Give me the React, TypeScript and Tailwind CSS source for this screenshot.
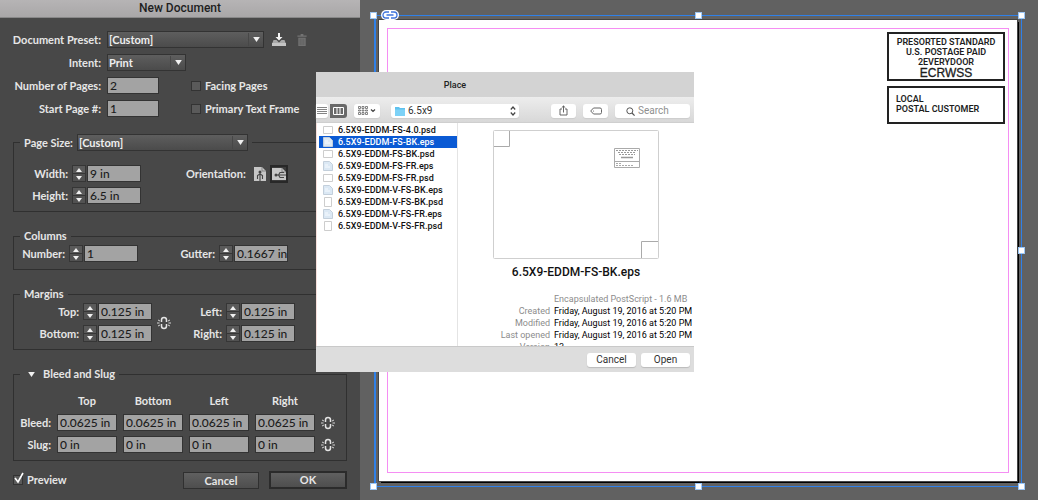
import { useId, type ReactNode } from 'react'
import clsx from 'clsx'

const field = 'h-[17px] min-w-0 border border-[#333] bg-[#a3a3a3] pl-[2px] text-[12px] leading-[15px] font-medium text-[#1c1c1c] outline-none'

function TriangleDown({ className }: { className?: string }) {
    return (
        <svg viewBox="0 0 8 6" className={clsx('h-[5px] w-[7px] fill-[#f0f0f0]', className)} aria-hidden="true">
            <path d="M0 0h8L4 6z" />
        </svg>
    )
}

function DarkSelect({ id, value, className }: { id: string; value: string; className: string }) {
    return (
        <div className={clsx('relative', className)}>
            <select
                id={id}
                className="block h-[17px] w-full appearance-none border border-[#333] bg-linear-to-b from-[#5e5e5e] to-[#4b4b4b] px-px text-[11px] leading-[15px] text-[#eee] outline-none"
                defaultValue={value}
            >
                <option>{value}</option>
            </select>
            <TriangleDown className="pointer-events-none absolute top-[6px] right-1" />
            <span className="pointer-events-none absolute inset-y-[2px] right-[15px] w-px bg-[#474747]" />
        </div>
    )
}

function Stepper() {
    return (
        <span className="flex h-[17px] w-[14px] shrink-0 flex-col gap-px border border-[#363636] bg-[#363636]">
            <button type="button" aria-label="Increase" className="grid flex-1 place-items-center bg-[#5a5a5a]">
                <svg viewBox="0 0 6 4" className="h-1 w-[6px] fill-[#f0f0f0]"><path d="M3 0l3 4H0z" /></svg>
            </button>
            <button type="button" aria-label="Decrease" className="grid flex-1 place-items-center bg-[#525252]">
                <svg viewBox="0 0 6 4" className="h-1 w-[6px] fill-[#f0f0f0]"><path d="M0 0h6L3 4z" /></svg>
            </button>
        </span>
    )
}

function StepField({ label, value, labelWidth }: { label: string; value: string; labelWidth: string }) {
    const id = useId()
    return (
        <div className="flex h-[17px] items-center">
            <label htmlFor={id} className={clsx('mr-1 text-right whitespace-nowrap', labelWidth)}>{label}</label>
            <Stepper />
            <input id={id} defaultValue={value} className={clsx(field, 'ml-px w-[54px]')} />
        </div>
    )
}

function DarkCheck({ label, checked }: { label: string; checked?: boolean }) {
    return (
        <label className="flex items-center gap-1 whitespace-nowrap">
            <span className="relative block h-[10px] w-[10px]">
                <input
                    type="checkbox"
                    defaultChecked={checked}
                    className="peer block h-[10px] w-[10px] appearance-none border border-[#333] bg-[#5a5a5a]"
                />
                <svg viewBox="0 0 12 12" className="pointer-events-none absolute -top-[3px] left-0 hidden h-3 w-3 peer-checked:block">
                    <path d="M2 6l3 4 5-9" fill="none" stroke="#fff" strokeWidth="1.600" />
                </svg>
            </span>
            {label}
        </label>
    )
}

function BrokenLink() {
    return (
        <button type="button" aria-label="Make all settings the same" className="grid h-[17px] w-[14px] place-items-center">
            <svg viewBox="0 0 14 14" className="h-[14px] w-[14px]" fill="none" stroke="#e4e4e4">
                <path d="M4.500 6V4a2.500 2.500 0 0 1 5 0v2M4.500 8v2a2.500 2.500 0 0 0 5 0V8" strokeWidth="1.500" />
                <path d="M3 5L1 4M2.500 7H0M3 9l-2 1M11 5l2-1M11.500 7H14M11 9l2 1" strokeWidth=".9" />
            </svg>
        </button>
    )
}

function Group({ legend, children }: { legend: ReactNode; children: ReactNode }) {
    return (
        <fieldset className="mt-[17px] min-w-0 border border-[#303030] pb-[7px]">
            <legend className="ml-[6px] px-1 leading-[14px]">{legend}</legend>
            {children}
        </fieldset>
    )
}

const sides = ['Top', 'Bottom', 'Left', 'Right']
const bleedRows = [
    { name: 'Bleed', value: '0.0625 in' },
    { name: 'Slug', value: '0 in' },
]

function NewDocument() {
    return (
        <section className="flex w-[360px] shrink-0 flex-col bg-[#484848] font-['Lato',sans-serif] text-[11px] leading-[14px] font-bold text-[#e6e6e6]">
            <h1 className="h-[18px] border-b border-[#888] bg-linear-to-b from-[#b6b4b5] to-[#a9a7a8] text-center font-['Roboto',sans-serif] text-[12px] leading-[17px] font-medium text-[#1e1e1e]">
                New Document
            </h1>
            <form className="flex flex-col pt-[13px] pr-[13px] pl-[13px]" onSubmit={(e) => e.preventDefault()}>
                <div className="grid grid-cols-[88px_1fr] items-center gap-x-[6px] gap-y-[6px]">
                    <label htmlFor="preset" className="justify-self-end whitespace-nowrap">Document Preset:</label>
                    <div className="flex h-[17px] items-center">
                        <DarkSelect id="preset" value="[Custom]" className="w-[157px]" />
                        <button type="button" aria-label="Save preset" className="ml-2">
                            <svg viewBox="0 0 14 14" className="h-[14px] w-[14px]">
                                <path d="M1.500 7L0 11v2h14v-2l-1.500-4H9.500L7 9.500 4.500 7z" fill="#a9a9a9" />
                                <path d="M0 10h14v3H0z" fill="#c4c4c4" />
                                <path d="M6 0h2v4h2.500L7 7.500 3.500 4H6z" fill="#f4f4f4" />
                            </svg>
                        </button>
                        <button type="button" aria-label="Delete preset" className="ml-[11px]" disabled>
                            <svg viewBox="0 0 10 13" className="h-3 w-[10px]" fill="#737373">
                                <path d="M3.500 0h3v1.500H10V3H0V1.500h3.500zM1 4h8v9H1z" />
                                <path d="M3 5v7M5 5v7M7 5v7" stroke="#555" strokeWidth=".7" />
                            </svg>
                        </button>
                    </div>
                    <label htmlFor="intent" className="justify-self-end">Intent:</label>
                    <DarkSelect id="intent" value="Print" className="w-[79px]" />
                    <label htmlFor="pages" className="justify-self-end whitespace-nowrap">Number of Pages:</label>
                    <div className="flex items-center gap-8">
                        <input id="pages" defaultValue="2" className={clsx(field, 'w-[52px]')} />
                        <DarkCheck label="Facing Pages" />
                    </div>
                    <label htmlFor="start" className="justify-self-end whitespace-nowrap">Start Page #:</label>
                    <div className="flex items-center gap-8">
                        <input id="start" defaultValue="1" className={clsx(field, 'w-[52px]')} />
                        <DarkCheck label="Primary Text Frame" />
                    </div>
                </div>

                <Group
                    legend={
                        <span className="flex items-center gap-1">
                            <label htmlFor="size" className="whitespace-nowrap">Page Size:</label>
                            <DarkSelect id="size" value="[Custom]" className="w-[171px]" />
                        </span>
                    }
                >
                    <div className="flex pt-[14px]">
                        <div className="flex flex-col gap-[5px]">
                            <StepField label="Width:" value="9 in" labelWidth="w-[54px]" />
                            <StepField label="Height:" value="6.5 in" labelWidth="w-[54px]" />
                        </div>
                        <div className="ml-[45px] flex h-[17px] items-center">
                            <span className="mr-[6px]">Orientation:</span>
                            <button type="button" aria-label="Portrait" className="grid h-[18px] w-[17px] place-items-center">
                                <svg viewBox="0 0 12 14" className="h-[14px] w-3">
                                    <path d="M0 0h8l4 4v10H0z" fill="#c6c6c6" />
                                    <path d="M8 0v4h4" fill="none" stroke="#777" strokeWidth=".8" />
                                    <path d="M6 14V6M3.500 12V8.500L6 7l2.500 1.500V12" fill="none" stroke="#444" strokeWidth="1.100" />
                                    <circle cx="6" cy="5" r="1.500" fill="#444" />
                                </svg>
                            </button>
                            <button type="button" aria-label="Landscape" className="ml-px grid h-[18px] w-[18px] place-items-center border-2 border-[#282828] bg-[#3c3c3c]">
                                <svg viewBox="0 0 14 12" className="h-3 w-[14px]">
                                    <path d="M0 0h10l4 4v8H0z" fill="#c6c6c6" />
                                    <path d="M10 0v4h4" fill="none" stroke="#777" strokeWidth=".8" />
                                    <path d="M14 7H5M12 4.500H8L6.500 7 8 9.500h4" fill="none" stroke="#444" strokeWidth="1.100" />
                                    <circle cx="4" cy="7" r="1.500" fill="#444" />
                                </svg>
                            </button>
                        </div>
                    </div>
                </Group>

                <Group legend="Columns">
                    <div className="flex gap-[25px] pt-[2px]">
                        <StepField label="Number:" value="1" labelWidth="w-[51px]" />
                        <StepField label="Gutter:" value="0.1667 in" labelWidth="w-[52px]" />
                    </div>
                </Group>

                <Group legend="Margins">
                    <div className="flex items-center pt-[2px]">
                        <div className="flex flex-col gap-[5px]">
                            <StepField label="Top:" value="0.125 in" labelWidth="w-[65px]" />
                            <StepField label="Bottom:" value="0.125 in" labelWidth="w-[65px]" />
                        </div>
                        <div className="mx-[5px]"><BrokenLink /></div>
                        <div className="flex flex-col gap-[5px]">
                            <StepField label="Left:" value="0.125 in" labelWidth="w-[46px]" />
                            <StepField label="Right:" value="0.125 in" labelWidth="w-[46px]" />
                        </div>
                    </div>
                </Group>

                <Group
                    legend={
                        <button type="button" className="flex items-center gap-2 leading-[14px]">
                            <TriangleDown className="ml-1" />
                            Bleed and Slug
                        </button>
                    }
                >
                    <table className="mt-[13px] border-separate border-spacing-0 leading-[14px]">
                        <thead>
                            <tr>
                                <td className="w-[43px]" />
                                {sides.map((side) => (
                                    <th key={side} scope="col" className="w-[66px] pr-[6px] pb-[6px] text-center font-bold">{side}</th>
                                ))}
                            </tr>
                        </thead>
                        <tbody>
                            {bleedRows.map((row, i) => (
                                <tr key={row.name}>
                                    <th scope="row" className={clsx('p-0 pr-[6px] text-right font-bold', i > 0 && 'pt-[5px]')}>{row.name}:</th>
                                    {sides.map((side) => (
                                        <td key={side} className={clsx('p-0 pr-[6px]', i > 0 && 'pt-[5px]')}>
                                            <input aria-label={`${row.name} ${side}`} defaultValue={row.value} className={clsx(field, 'block w-[60px]')} />
                                        </td>
                                    ))}
                                    <td className={clsx('p-0', i > 0 && 'pt-[5px]')}><BrokenLink /></td>
                                </tr>
                            ))}
                        </tbody>
                    </table>
                </Group>

                <div className="mt-[10px] flex items-center">
                    <DarkCheck label="Preview" checked />
                    <button type="button" className="ml-auto h-[17px] w-[76px] border border-[#303030] bg-linear-to-b from-[#606060] to-[#4e4e4e] leading-[15px]">
                        Cancel
                    </button>
                    <button type="submit" className="ml-[10px] h-[18px] w-[78px] border-2 border-[#2b2b2b] bg-linear-to-b from-[#606060] to-[#4e4e4e] leading-[14px]">
                        OK
                    </button>
                </div>
            </form>
        </section>
    )
}

const handles = [
    '-top-[4px] -left-[6px]',
    '-top-[4px] left-1/2 -ml-1',
    '-top-[4px] -right-[4px]',
    'top-1/2 -mt-1 -right-[4px]',
    '-bottom-[4px] -left-[6px]',
    '-bottom-[4px] left-1/2 -ml-1',
    '-bottom-[4px] -right-[4px]',
]

function Artboard() {
    return (
        <main className="flex flex-1 bg-[#616161] pt-[15px] pr-4 pb-[13px] pl-[14px] font-['Roboto',sans-serif] text-[#1d1d1d]">
            <div className="relative flex flex-1 border border-l-2 border-[#2f80e8] pt-1 pr-1 pb-[5px] pl-[3px]">
                <div className="flex-1 bg-white p-2 shadow-[0_0_0_1px_#444,2px_2px_0_#000]">
                    <div className="flex h-full flex-col items-end gap-[5px] border border-[#f58ef3] pt-[3px] pr-[3px]">
                        <div className="w-[118px] border-2 border-[#222] pt-[3px] text-center text-[9px] leading-[10px] font-semibold">
                            <p>PRESORTED STANDARD</p>
                            <p>U.S. POSTAGE PAID</p>
                            <p>2EVERYDOOR</p>
                            <p className="font-['Liberation_Sans',sans-serif] text-[12px] leading-[12px] font-normal [-webkit-text-stroke:0.3px_#1d1d1d]">ECRWSS</p>
                        </div>
                        <div className="w-[118px] border-2 border-[#222] px-[7px] pt-[6px] pb-2 text-[9px] leading-[10px] font-semibold">
                            <p>LOCAL</p>
                            <p>POSTAL CUSTOMER</p>
                        </div>
                    </div>
                </div>
                {handles.map((place) => (
                    <span key={place} className={clsx('absolute h-[7px] w-[7px] border border-[#9cc6f5] bg-white', place)} />
                ))}
                <svg viewBox="0 0 18 10" className="absolute -top-[6px] left-[5px] h-[10px] w-[18px]" fill="none">
                    <rect x="0" y="0" width="18" height="10" rx="5" fill="#fff" />
                    <path d="M8 2H5a3 3 0 0 0 0 6h3M10 2h3a3 3 0 0 1 0 6h-3M5.500 5h7" stroke="#3f74dc" strokeWidth="1.300" />
                </svg>
            </div>
        </main>
    )
}

const files = [
    '6.5X9-EDDM-FS-4.0.psd',
    '6.5X9-EDDM-FS-BK.eps',
    '6.5X9-EDDM-FS-BK.psd',
    '6.5X9-EDDM-FS-FR.eps',
    '6.5X9-EDDM-FS-FR.psd',
    '6.5X9-EDDM-V-FS-BK.eps',
    '6.5X9-EDDM-V-FS-BK.psd',
    '6.5X9-EDDM-V-FS-FR.eps',
    '6.5X9-EDDM-V-FS-FR.psd',
]
const selectedFile = '6.5X9-EDDM-FS-BK.eps'

const details = [
    { label: '', value: 'Encapsulated PostScript - 1.6 MB' },
    { label: 'Created', value: 'Friday, August 19, 2016 at 5:20 PM' },
    { label: 'Modified', value: 'Friday, August 19, 2016 at 5:20 PM' },
    { label: 'Last opened', value: 'Friday, August 19, 2016 at 5:20 PM' },
    { label: 'Version', value: '13' },
]

function FileIcon({ name }: { name: string }) {
    const eps = name.endsWith('.eps')
    const tall = name.includes('-V-')
    if (eps) {
        return (
            <svg viewBox="0 0 10 10" className="h-[10px] w-[10px]">
                <path d="M.5.5h6l3 3v6h-9z" fill="#dbe8f4" stroke="#c3cfdb" />
                <path d="M2 4h3M2 6h5" stroke="#f7fbff" />
            </svg>
        )
    }
    return (
        <svg viewBox="0 0 10 10" className="h-[10px] w-[10px]">
            {tall
                ? <path d="M1.500.5h7v9h-7z" fill="#fff" stroke="#cdcdcd" />
                : <path d="M.5 1.500h9v7h-9z" fill="#fff" stroke="#cdcdcd" />}
        </svg>
    )
}

function PlaceDialog() {
    const tool = 'grid h-[14px] place-items-center rounded-[3px] bg-white text-[#555] shadow-[0_1px_1px_#ccc]'

    return (
        <div role="dialog" aria-label="Place" className="absolute top-[72px] left-[316px] w-[378px] bg-white font-['Roboto',sans-serif] text-[9px] leading-[12px] text-[#222]">
            <h2 className="h-[25px] bg-[#d3d3d3] pr-[100px] text-center leading-[27px] font-medium">Place</h2>
            <div className="flex h-[26px] items-center border-b border-[#cfcfcf] bg-linear-to-b from-[#ededed] to-[#d8d8d8] pt-[2px] pr-1">
                <button type="button" aria-label="List view" className={clsx(tool, 'w-3 rounded-l-none')}>
                    <svg viewBox="0 0 10 8" className="h-2 w-[10px]" stroke="#666"><path d="M0 .5h10M0 2.500h10M0 4.500h10M0 6.500h10" strokeWidth=".8" /></svg>
                </button>
                <button type="button" aria-label="Column view" className="ml-[2px] grid h-[14px] w-[17px] place-items-center rounded-r-[3px] bg-[#686868]">
                    <svg viewBox="0 0 11 8" className="h-2 w-[11px]" fill="none" stroke="#fff"><path d="M.5.5h10v7H.5zM4 .5v7M7 .5v7" /></svg>
                </button>
                <button type="button" aria-label="Group items" className={clsx(tool, 'ml-[7px] w-[26px]')}>
                    <svg viewBox="0 0 18 9" className="h-[9px] w-[18px]" fill="none" stroke="#666">
                        <path d="M.5.5h2v2h-2zM4 .5h2v2H4zM7.500.5h2v2h-2zM.5 4h2v1h-2zM4 4h2v1H4zM7.500 4h2v1h-2zM.5 6.500h2v2h-2zM4 6.500h2v2H4zM7.500 6.500h2v2h-2z" strokeWidth=".8" />
                        <path d="M13 3.500l2 2 2-2" stroke="#444" strokeWidth="1.200" />
                    </svg>
                </button>
                <div className="relative ml-[11px] w-[128px]">
                    <select aria-label="Folder" defaultValue="6.5x9" className="block h-[14px] w-full appearance-none rounded-[3px] bg-white pl-[17px] text-[10px] leading-[14px] text-[#333] shadow-[0_1px_1px_#ccc]">
                        <option>6.5x9</option>
                    </select>
                    <svg viewBox="0 0 10 9" className="pointer-events-none absolute top-[3px] left-1 h-[9px] w-[10px]">
                        <path d="M0 0h4l1 1h5v8H0z" fill="#5fc1ee" />
                        <path d="M0 2.500h10V9H0z" fill="#7dd2f7" />
                    </svg>
                    <svg viewBox="0 0 6 10" className="pointer-events-none absolute top-[2px] right-[3px] h-[10px] w-[6px]" fill="none" stroke="#444" strokeWidth="1.200">
                        <path d="M.8 3.500L3 1l2.200 2.500M.8 6.500L3 9l2.200-2.500" />
                    </svg>
                </div>
                <button type="button" aria-label="Share" className={clsx(tool, 'ml-8 w-[25px]')}>
                    <svg viewBox="0 0 9 11" className="h-[11px] w-[9px]" fill="none" stroke="#555" strokeWidth=".9">
                        <path d="M3 4H1v6h7V4H6M4.500 7.500V1M2.700 2.700L4.500 1l1.800 1.700" />
                    </svg>
                </button>
                <button type="button" aria-label="Tags" className={clsx(tool, 'ml-[7px] w-[25px]')}>
                    <svg viewBox="0 0 12 8" className="h-2 w-3" fill="none" stroke="#666">
                        <path d="M3.500 1h6.500a1.500 1.500 0 0 1 1.500 1.500v3A1.500 1.500 0 0 1 10 7H3.500L.7 4z" />
                        <circle cx="3.500" cy="4" r=".6" fill="#666" stroke="none" />
                    </svg>
                </button>
                <label className="relative ml-[7px] block min-w-0 flex-1">
                    <input aria-label="Search" placeholder="Search" className="block h-[14px] w-full rounded-[3px] bg-white pl-[23px] text-[10px] shadow-[0_1px_1px_#ccc] outline-none placeholder:text-[#8f8f8f]" />
                    <svg viewBox="0 0 9 9" className="pointer-events-none absolute top-[3px] left-[11px] h-[9px] w-[9px]" fill="none" stroke="#555">
                        <circle cx="3.800" cy="3.800" r="3" />
                        <path d="M6 6l2.600 2.600" strokeWidth="1.200" />
                    </svg>
                </label>
            </div>

            <div className="flex h-[223px] overflow-hidden">
                <ul className="w-[142px] shrink-0 border-r border-l border-r-[#e4e4e4] border-l-[#f6dfdb] pt-px pl-[2px] font-medium text-[#111]">
                    {files.map((name) => (
                        <li
                            key={name}
                            className={clsx('flex h-3 items-center gap-[5px] pl-1 whitespace-nowrap', name === selectedFile && 'bg-[#0a5ad4] text-white')}
                        >
                            <FileIcon name={name} />
                            {name}
                        </li>
                    ))}
                </ul>
                <div className="min-w-0 flex-1 pt-[7px]">
                    <svg viewBox="0 0 166 129" className="mx-auto block h-[129px] w-[166px]" fill="none">
                        <rect x=".5" y=".5" width="165" height="128" rx="1" stroke="#cfcfcf" />
                        <path d="M16.500 1v15.500H1M148.500 128v-16.500H165" stroke="#aaa" />
                        <path d="M121.500 18.500h25v19h-25zM121.500 31.500h25" stroke="#aaa" />
                        <path d="M123 20.500h22M125 22.500h18M126 24.500h16" stroke="#999" strokeDasharray="2 1" />
                        <path d="M128 27.500h12" stroke="#999" strokeWidth="1.500" />
                        <path d="M123 33.500h6M123 35.500h17" stroke="#aaa" strokeDasharray="2 1" />
                    </svg>
                    <h3 className="mt-[5px] text-center text-[12px] leading-4 font-medium text-[#111]">{selectedFile}</h3>
                    <dl className="mt-[13px] grid grid-cols-[92px_1fr] gap-x-1 whitespace-nowrap">
                        {details.map(({ label, value }) => (
                            <div key={label} className="contents">
                                <dt className="text-right text-[#8c8c8c]">{label}</dt>
                                <dd className={label ? 'text-black' : 'text-[#8c8c8c]'}>{value}</dd>
                            </div>
                        ))}
                    </dl>
                </div>
            </div>

            <div className="flex h-[26px] items-center justify-end gap-[5px] border-t border-[#c9c9c9] bg-[#dddddd] pr-1 text-[10px]">
                <button type="button" className="h-[14px] w-[49px] rounded-[3px] bg-white text-[#333] shadow-[0_1px_1px_#bbb]">Cancel</button>
                <button type="button" className="h-[14px] w-[49px] rounded-[3px] bg-white text-[#333] shadow-[0_1px_1px_#bbb]">Open</button>
            </div>
        </div>
    )
}

export default function App() {
    return (
        <div className="relative flex min-h-screen">
            <NewDocument />
            <Artboard />
            <PlaceDialog />
        </div>
    )
}
